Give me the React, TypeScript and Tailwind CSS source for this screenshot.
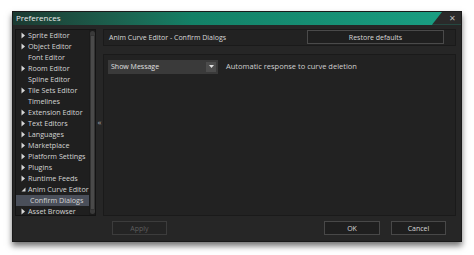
import React from "react";

const items: { label: string; arrow: "right" | "down" | "none"; indent?: boolean; selected?: boolean }[] = [
  { label: "Sprite Editor", arrow: "right" },
  { label: "Object Editor", arrow: "right" },
  { label: "Font Editor", arrow: "none" },
  { label: "Room Editor", arrow: "right" },
  { label: "Spline Editor", arrow: "none" },
  { label: "Tile Sets Editor", arrow: "right" },
  { label: "Timelines", arrow: "none" },
  { label: "Extension Editor", arrow: "right" },
  { label: "Text Editors", arrow: "right" },
  { label: "Languages", arrow: "right" },
  { label: "Marketplace", arrow: "right" },
  { label: "Platform Settings", arrow: "right" },
  { label: "Plugins", arrow: "right" },
  { label: "Runtime Feeds", arrow: "right" },
  { label: "Anim Curve Editor", arrow: "down" },
  { label: "Confirm Dialogs", arrow: "none", indent: true, selected: true },
  { label: "Asset Browser", arrow: "right" },
];

function Arrow({ kind }: { kind: "right" | "down" | "none" }) {
  if (kind === "none") return <span className="w-[5px] shrink-0" />;
  if (kind === "right")
    return (
      <svg width="5" height="7" viewBox="0 0 5 7" className="shrink-0">
        <path d="M0.5 0.5 L4 3.5 L0.5 6.5 Z" fill="#d8d8d8" />
      </svg>
    );
  return (
    <svg width="5" height="7" viewBox="0 0 5 7" className="shrink-0">
      <path d="M4.5 1.5 L4.5 5.5 L0.5 5.5 Z" fill="#d8d8d8" />
    </svg>
  );
}

export default function App() {
  return (
    <div
      className="w-[474px] h-[255px] bg-white relative overflow-hidden"
      style={{ fontFamily: '"Open Sans", "Noto Sans", sans-serif' }}
    >
      <div className="absolute left-[12px] top-[11px] w-[450px] h-[231px] bg-[#262626] shadow-[0_4px_6px_rgba(0,0,0,0.55)] flex flex-col border border-[#1a1a1a]">
        {/* title bar */}
        <div className="relative h-[13px] bg-gradient-to-r from-[#1b3a31] via-[#138066] via-40% to-[#1aa084] flex items-center pl-[3px]">
          <span className="text-[8px] text-[#ececec] leading-none">Preferences</span>
          <div
            className="absolute right-0 top-0 h-full w-[29px] bg-[#2a2a2a] flex items-center justify-end pr-[5px]"
            style={{ clipPath: "polygon(10px 0, 100% 0, 100% 100%, 0 100%)" }}
          >
            <span className="text-[8px] text-[#bbbbbb] leading-none">✕</span>
          </div>
        </div>
        {/* body */}
        <div className="flex flex-1 px-[2px] pt-[4px] gap-0">
          {/* tree */}
          <div className="w-[81px] h-[187px] bg-[#1f1f1f] border border-[#141414] flex">
            <div className="flex-1 flex flex-col pt-[0px]">
              {items.map((it) => (
                <div
                  key={it.label}
                  className={`h-[11px] shrink-0 flex items-center gap-[2px] ${it.indent ? "pl-[14px]" : "pl-[5px]"} ${
                    it.selected ? "bg-[#4a4f5a]" : ""
                  }`}
                >
                  {!it.indent && <Arrow kind={it.arrow} />}
                  <span className="text-[7.2px] text-[#d4d4d4] leading-none whitespace-nowrap">{it.label}</span>
                </div>
              ))}
            </div>
            <div className="w-[6px] flex flex-col items-center py-[1px] bg-[#1b1b1b]">
              <div className="w-[5px] h-[4px] rounded-t-full bg-[#3a3a3a]" />
              <div className="flex-1 w-[5px] bg-[#4a4a4a] border border-[#333]" />
              <div className="w-[5px] h-[4px] rounded-b-full bg-[#3a3a3a]" />
            </div>
          </div>
          <div className="w-[7px] flex items-center justify-center">
            <span className="text-[8px] text-[#aaaaaa] leading-none">«</span>
          </div>
          {/* right */}
          <div className="flex-1 flex flex-col gap-[8px] pr-[3px]">
            <div className="h-[17px] bg-[#222222] border border-[#1a1a1a] flex items-center pl-[5px] pr-[11px]">
              <span className="text-[7px] text-[#d8d8d8] leading-none">Anim Curve Editor - Confirm Dialogs</span>
              <div className="ml-auto w-[137px] h-[14px] bg-[#1f1f1f] border border-[#4a4a4a] flex items-center justify-center">
                <span className="text-[7px] text-[#d8d8d8] leading-none">Restore defaults</span>
              </div>
            </div>
            <div className="flex-1 bg-[#222222] border border-[#1a1a1a] pt-[5px] pl-[4px]">
              <div className="flex items-center gap-[8px]">
                <div className="w-[110px] h-[14px] bg-[#3a3a3a] flex items-center pl-[3px]">
                  <span className="text-[7px] text-[#e0e0e0] leading-none">Show Message</span>
                  <div className="ml-auto mr-[2px] w-[10px] h-[10px] bg-[#4c4c4c] flex items-center justify-center">
                    <svg width="5" height="3" viewBox="0 0 5 3">
                      <path d="M0 0 L5 0 L2.5 3 Z" fill="#e0e0e0" />
                    </svg>
                  </div>
                </div>
                <span className="text-[7.5px] text-[#d0d0d0] leading-none">Automatic response to curve deletion</span>
              </div>
            </div>
          </div>
        </div>
        {/* footer */}
        <div className="h-[26px] flex items-center pl-[99px] pr-[15px]">
          <div className="w-[55px] h-[14px] border border-[#3c3c3c] bg-[#242424] flex items-center justify-center">
            <span className="text-[7px] text-[#5e5e5e] leading-none">Apply</span>
          </div>
          <div className="ml-auto flex gap-[11px]">
            <div className="w-[56px] h-[14px] border border-[#484848] bg-[#1f1f1f] flex items-center justify-center">
              <span className="text-[7px] text-[#d8d8d8] leading-none">OK</span>
            </div>
            <div className="w-[55px] h-[14px] border border-[#484848] bg-[#1f1f1f] flex items-center justify-center">
              <span className="text-[7px] text-[#d8d8d8] leading-none">Cancel</span>
            </div>
          </div>
        </div>
      </div>
    </div>
  );
}
